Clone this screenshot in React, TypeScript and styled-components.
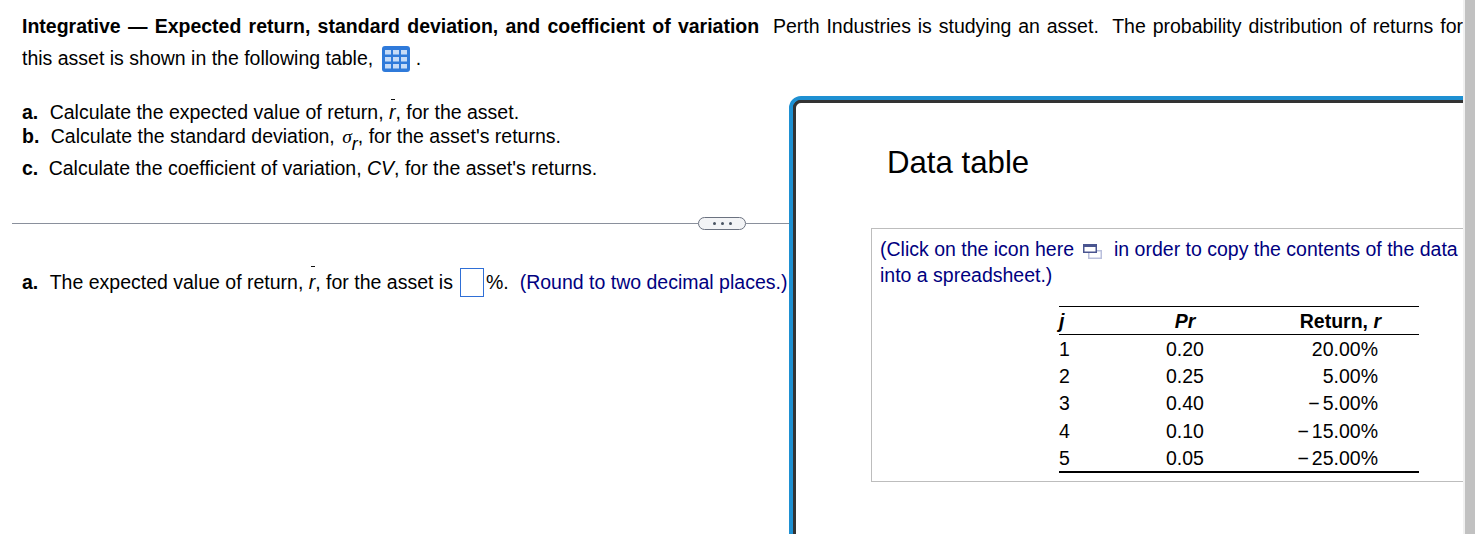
import React from "react";
import styled, { createGlobalStyle } from "styled-components";

const Global = createGlobalStyle`
  html, body { margin: 0; padding: 0; background: #fff; overflow: hidden; }
  body { font-family: "Liberation Sans", Arial, sans-serif; font-size: 19.5px; color: #000; }
`;

const Page = styled.div`
  display: flex;
  width: 1475px;
  height: 534px;
  overflow: hidden;
  background: #fff;
`;
const Main = styled.main`
  position: relative;
  width: 1463px;
  height: 534px;
  overflow: hidden;
  flex: none;
`;
const Gutter = styled.div`
  width: 12px;
  flex: none;
  background: #f1f1f1;
  display: flex;
  justify-content: flex-end;
`;
const Thumb = styled.div`
  width: 10px;
  height: 100%;
  background: #c1c1c1;
`;
const Intro = styled.p`
  margin: 0;
  padding: 10px 0 0 22px;
  width: 1441px;
  font-size: 19.5px;
  line-height: 32px;
`;
const JustifiedLine = styled.span`
  display: block;
  text-align: justify;
  text-align-last: justify;
  white-space: normal;
`;
const Strong = styled.b`
  font-weight: 700;
  word-spacing: 0.4px;
`;
const TableIcon = styled.svg`
  width: 28px;
  height: 26px;
  vertical-align: -7px;
  margin: 0 6px 0 3px;
`;
const Tasks = styled.ul`
  list-style: none;
  margin: 26px 0 0;
  padding: 0 0 0 22px;
`;
const Task = styled.li<{ $h: number }>`
  height: ${(p) => p.$h}px;
  line-height: 24px;
  white-space: nowrap;
`;
const Label = styled.b<{ $gap?: number }>`
  font-weight: 700;
  margin-right: ${(p) => p.$gap ?? 6}px;
`;
const Var = styled.i`
  font-style: italic;
`;
const Bar = styled.span`
  position: relative;
  display: inline-block;
  font-style: italic;
  &::before {
    content: "";
    position: absolute;
    right: 0;
    top: -1px;
    width: 4px;
    height: 1px;
    background: #111;
  }
`;
const Sigma = styled.i`
  font-family: "Liberation Serif", serif;
  font-style: italic;
  margin-left: 2px;
`;
const Sub = styled.sub`
  font-style: italic;
  font-size: 18px;
  line-height: 0;
  vertical-align: -7px;
`;
const Divider = styled.div`
  display: flex;
  align-items: center;
  height: 14px;
  margin: 36px 0 0 12px;
  width: 777px;
  &::before, &::after {
    content: "";
    height: 1px;
    background: #8a909c;
  }
  &::before { width: 686px; }
  &::after { flex: 1; }
`;
const Pill = styled.button`
  width: 48px;
  height: 13px;
  padding: 0;
  border: 1px solid #6b7280;
  border-radius: 7px;
  background: #f3f4f6;
  display: flex;
  align-items: center;
  justify-content: center;
  gap: 5px;
`;
const Dot = styled.span`
  width: 3px;
  height: 3px;
  border-radius: 50%;
  background: #4b5563;
`;
const Answer = styled.p`
  margin: 37px 0 0;
  padding-left: 22px;
  height: 30px;
  line-height: 30px;
  white-space: nowrap;
  display: flex;
  align-items: center;
`;
const InputBox = styled.span`
  display: inline-block;
  width: 22px;
  height: 27px;
  border: 1px solid #2f6fd6;
  margin: 0 2px 0 7px;
`;
const Hint = styled.span`
  color: #000080;
  margin-left: 11px;
`;
const Dialog = styled.section`
  position: absolute;
  left: 789px;
  top: 96px;
  width: 690px;
  height: 470px;
  border: solid #1e90d2;
  border-width: 4px;
  border-radius: 12px;
  background: #333;
  box-sizing: border-box;
`;
const DialogInner = styled.div`
  height: 100%;
  box-sizing: border-box;
  border: 3px solid #333;
  border-radius: 8px;
  background: #fff;
  padding: 41px 0 0 91px;
`;
const Title = styled.h2`
  margin: 0;
  font-size: 31.2px;
  line-height: 38px;
  font-weight: 400;
`;
const DataBox = styled.div`
  margin: 46px 0 0 -16px;
  width: 700px;
  height: 254px;
  box-sizing: border-box;
  border: 1px solid #bdbdbd;
  padding: 7px 0 0 8px;
`;
const Note = styled.div`
  width: 582px;
  color: #000080;
  font-size: 19.5px;
  line-height: 26px;
`;
const CopyIcon = styled.svg`
  width: 19px;
  height: 16px;
  vertical-align: -3px;
  margin: 0 12px 0 9px;
`;
const Table = styled.table`
  border-collapse: collapse;
  margin: 18px 0 0 179px;
  width: 360px;
  table-layout: fixed;
  border-top: 1px solid #000;
  border-bottom: 2px solid #000;
`;
const Th = styled.th<{ $w: number; $align: string; $pad?: number }>`
  width: ${(p) => p.$w}px;
  height: 28px;
  padding: 2px ${(p) => p.$pad ?? 0}px 0 0;
  box-sizing: border-box;
  font-size: 19.5px;
  font-weight: 700;
  text-align: ${(p) => p.$align};
  border-bottom: 1px solid #000;
`;
const Td = styled.td<{ $align: string; $pad?: number }>`
  height: 27.5px;
  padding: 0 ${(p) => p.$pad ?? 0}px 0 0;
  box-sizing: border-box;
  font-size: 19.5px;
  line-height: 24px;
  text-align: ${(p) => p.$align};
`;
const Minus = styled.span`
  margin-right: 3px;
`;

const rows: [string, string, boolean, string][] = [
  ["1", "0.20", false, "20.00%"],
  ["2", "0.25", false, "5.00%"],
  ["3", "0.40", true, "5.00%"],
  ["4", "0.10", true, "15.00%"],
  ["5", "0.05", true, "25.00%"],
];

export default function App() {
  return (
    <Page>
      <Global />
      <Main>
        <Intro>
          <JustifiedLine>
            <Strong>Integrative — Expected return, standard deviation, and coefficient of variation</Strong>
            {"\u00A0 "}Perth Industries is studying an asset.{"\u00A0 "}The probability distribution of returns for
          </JustifiedLine>
          this asset is shown in the following table,{" "}
          <TableIcon viewBox="0 0 28 26" aria-hidden="true">
            <rect width="28" height="26" rx="3" fill="#2f7ada" />
            {[4, 11, 18].map((y) =>
              [3, 11, 19].map((x) => <rect key={`${x}-${y}`} x={x} y={y} width="6" height="4.5" fill="#c6dbf7" />)
            )}
          </TableIcon>
          .
        </Intro>
        <Tasks>
          <Task $h={24}>
            <Label>a.</Label> Calculate the expected value of return, <Bar>r</Bar>, for the asset.
          </Task>
          <Task $h={32}>
            <Label>b.</Label> Calculate the standard deviation, <Sigma>σ</Sigma><Sub>r</Sub>, for the asset's returns.
          </Task>
          <Task $h={24}>
            <Label $gap={5}>c.</Label> Calculate the coefficient of variation, <Var>CV</Var>, for the asset's returns.
          </Task>
        </Tasks>
        <Divider>
          <Pill aria-label="more"><Dot /><Dot /><Dot /></Pill>
        </Divider>
        <Answer>
          <Label>a.</Label>&nbsp;The expected value of return, <Bar>&nbsp;r</Bar>, for the asset is
          <InputBox />
          %.
          <Hint>(Round to two decimal places.)</Hint>
        </Answer>
        <Dialog>
          <DialogInner>
            <Title>Data table</Title>
            <DataBox>
              <Note>
                (Click on the icon here
                <CopyIcon viewBox="0 0 19 16" aria-hidden="true">
                  <rect x="5.75" y="7.75" width="12.5" height="7.5" fill="none" stroke="#b9bfdc" strokeWidth="1.5" />
                  <rect x="0.75" y="1.75" width="12.5" height="7.5" fill="#fff" stroke="#4a5590" strokeWidth="1.5" />
                  <rect x="0.75" y="1" width="12.5" height="3" fill="#4a5590" />
                </CopyIcon>
                in order to copy the contents of the data into a spreadsheet.)
              </Note>
              <Table>
                <thead>
                  <tr>
                    <Th $w={100} $align="left"><Var>j</Var></Th>
                    <Th $w={52} $align="center"><Var>Pr</Var></Th>
                    <Th $w={208} $align="right" $pad={38}>Return, <Var>r</Var></Th>
                  </tr>
                </thead>
                <tbody>
                  {rows.map((r) => (
                    <tr key={r[0]}>
                      <Td $align="left">{r[0]}</Td>
                      <Td $align="center">{r[1]}</Td>
                      <Td $align="right" $pad={41}>
                        {r[2] && <Minus>−</Minus>}
                        {r[3]}
                      </Td>
                    </tr>
                  ))}
                </tbody>
              </Table>
            </DataBox>
          </DialogInner>
        </Dialog>
      </Main>
      <Gutter><Thumb /></Gutter>
    </Page>
  );
}
